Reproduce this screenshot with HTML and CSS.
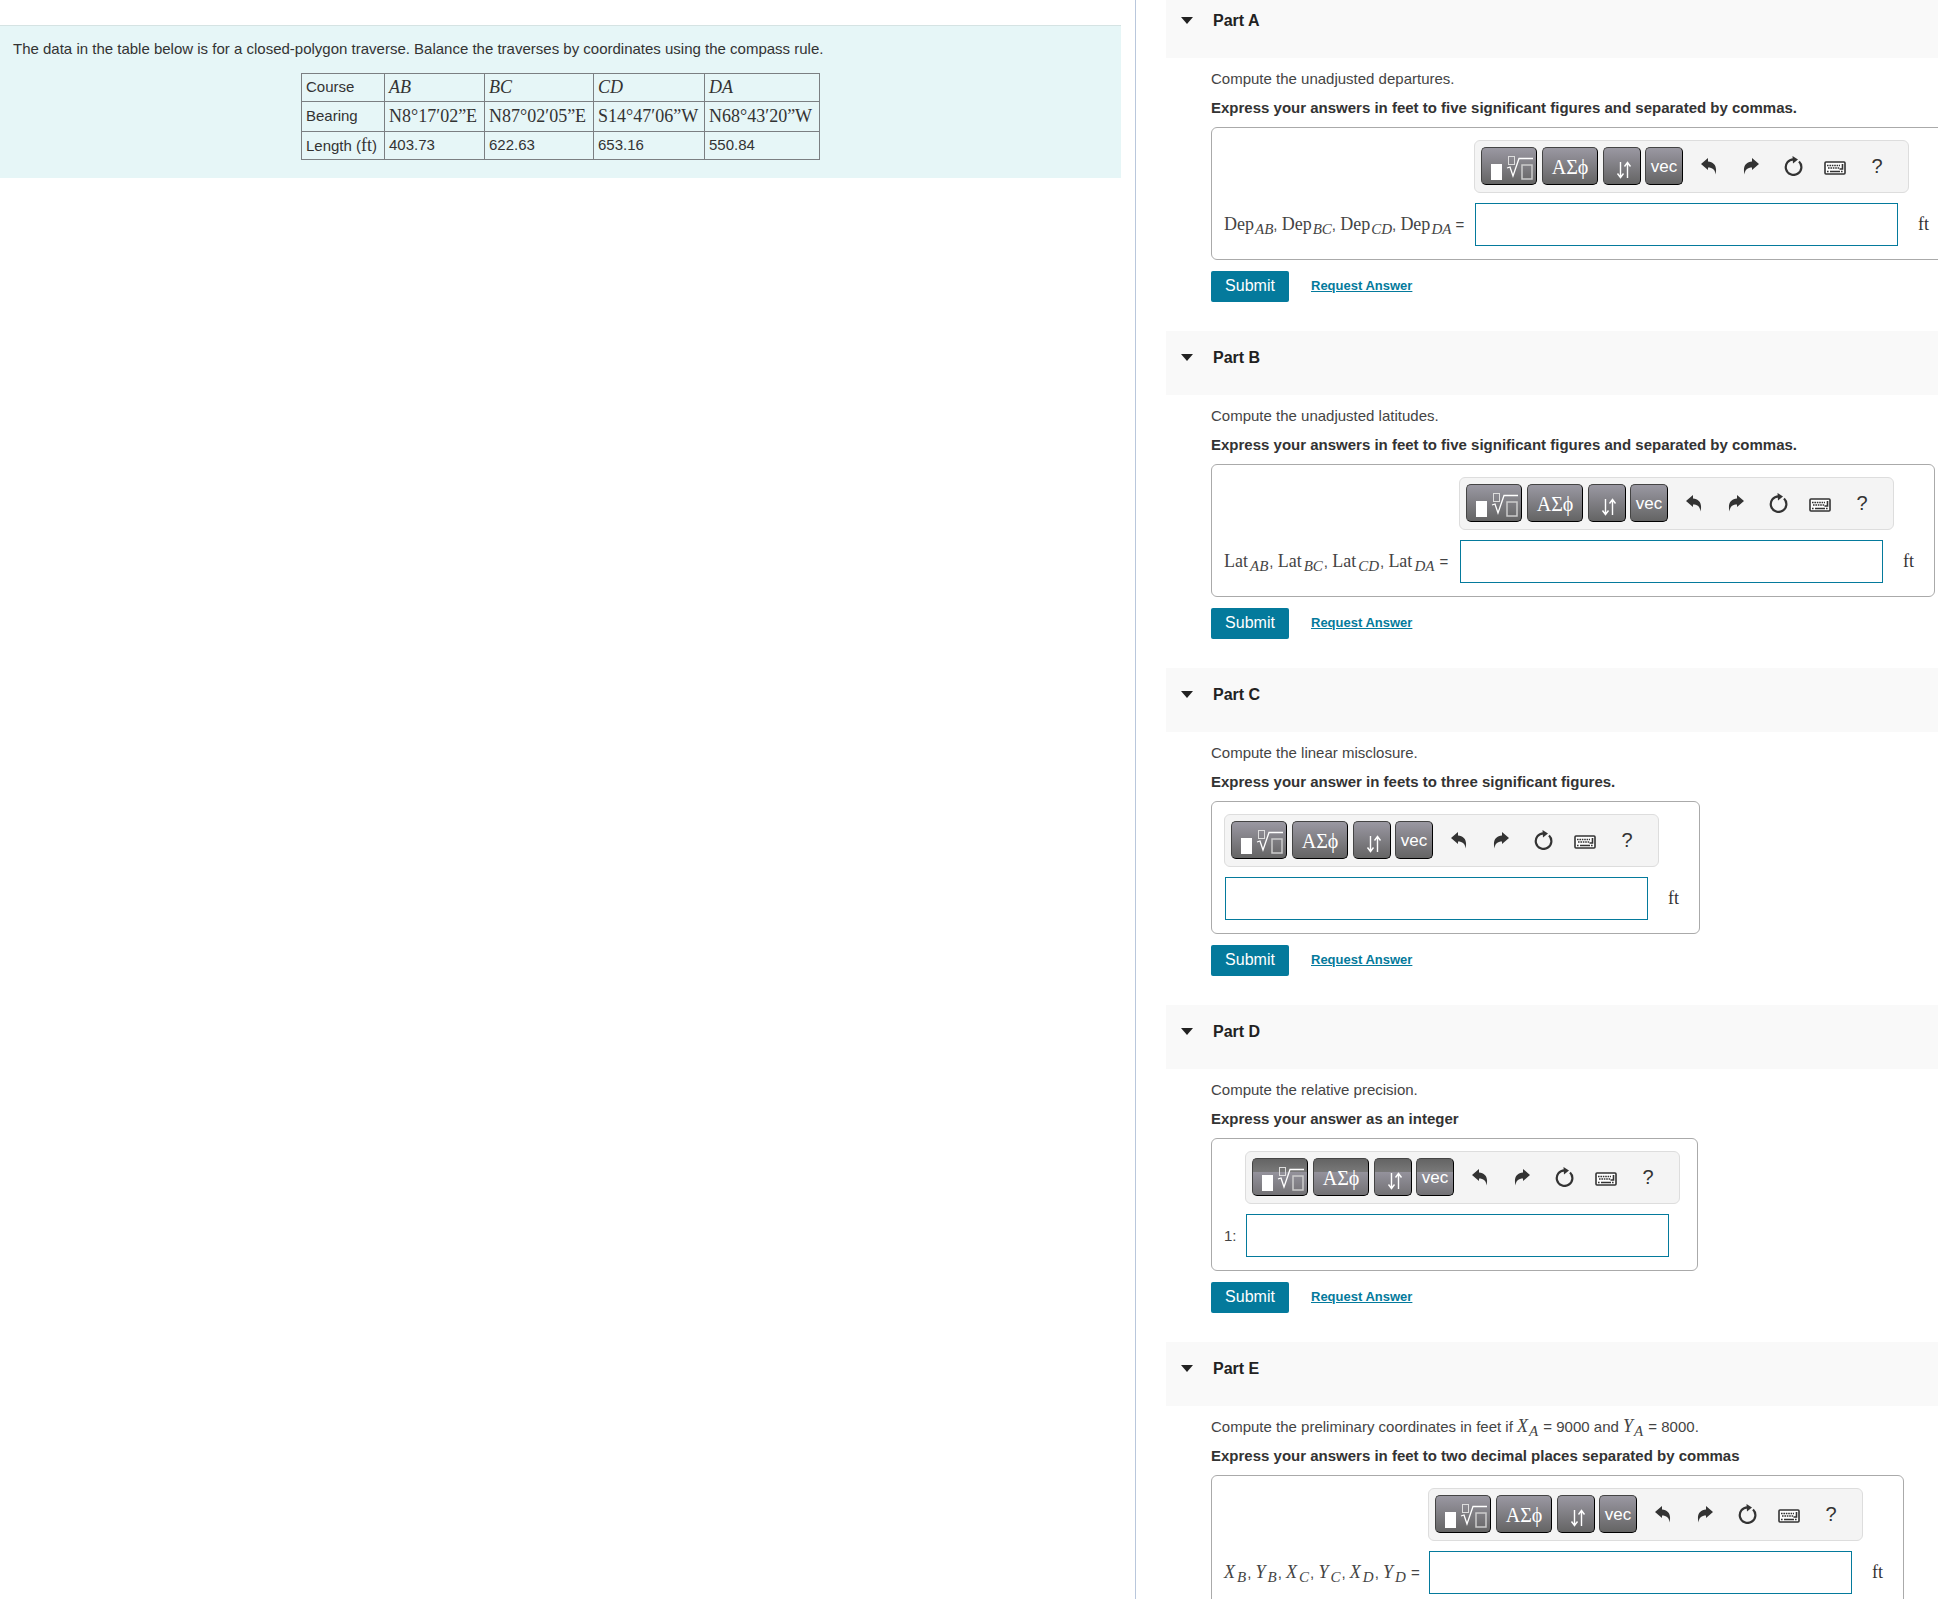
FILE: index.html
```html
<!DOCTYPE html>
<html lang="en">
<head>
    <meta charset="UTF-8">
    <meta name="viewport" content="width=device-width, initial-scale=1.0">
    <title>Closed-polygon traverse</title>
    <link rel="stylesheet" href="styles.css">
</head>
<body>
    <!-- Icons shared by the toolbars -->
    <svg class="defs" aria-hidden="true">
        <symbol id="icon-root" viewBox="1 1 54 36">
            <rect x="10" y="17" width="11" height="16" fill="#fff"/>
            <rect x="27.500" y="9.500" width="6" height="8" fill="none" stroke="#ddd"/>
            <path d="M26 21l3-1 3 9 6-17.500h14" fill="none" stroke="#fff" stroke-width="1.300"/>
            <rect x="41" y="18" width="10" height="14" fill="none" stroke="#ccc" stroke-width="1.500"/>
        </symbol>
        <symbol id="icon-arrows" viewBox="1 1 36 36">
            <path d="M17.500 15v15M14.500 26.500l3 4 3-4M24.500 31V16M21.500 19.500l3-4 3 4" fill="none" stroke="#fff" stroke-width="1.400"/>
        </symbol>
        <symbol id="icon-undo" viewBox="0 0 16 17">
            <path d="M0 6L7 0v3.500c6 .5 9.500 4.500 7.500 13C14 11.500 11.500 9.500 7 9.500V12z" fill="#333"/>
        </symbol>
        <symbol id="icon-redo" viewBox="0 0 16 17">
            <path d="M16 6L9 0v3.500C3 4-.5 8 1.500 16.500 2 11.500 4.500 9.500 9 9.500V12z" fill="#333"/>
        </symbol>
        <symbol id="icon-reset" viewBox="0 0 19 20">
            <path d="M15 5.500A7.800 7.800 0 1 1 9.500 3.300" fill="none" stroke="#333" stroke-width="2.200"/>
            <path d="M8.500 0l5.500 3.500-5 4z" fill="#333"/>
        </symbol>
        <symbol id="icon-keyboard" viewBox="0 0 22 14">
            <rect x="1" y="1" width="20" height="12" rx="1" fill="#fff" stroke="#333" stroke-width="1.600"/>
            <path d="M3 4.500h13M4 7h12M3 10.500h2M17 10.500h2" stroke="#333" stroke-width="1.600" stroke-dasharray="1.600 .8"/>
            <path d="M6 10.500h10M18.500 3v5h-3" fill="none" stroke="#333" stroke-width="1.600"/>
        </symbol>
    </svg>

    <main class="page">
        <section class="problem">
            <div class="intro">
                <p>The data in the table below is for a closed-polygon traverse. Balance the traverses by coordinates using the compass rule.</p>
                <table class="courses">
                    <tr>
                        <td class="col-name">Course</td>
                        <td class="col-ab"><i class="math">AB</i></td>
                        <td class="col-bc"><i class="math">BC</i></td>
                        <td class="col-cd"><i class="math">CD</i></td>
                        <td class="col-da"><i class="math">DA</i></td>
                    </tr>
                    <tr class="bearing">
                        <td>Bearing</td>
                        <td><span class="math">N8°17′02”E</span></td>
                        <td><span class="math">N87°02′05”E</span></td>
                        <td><span class="math">S14°47′06”W</span></td>
                        <td><span class="math">N68°43′20”W</span></td>
                    </tr>
                    <tr>
                        <td>Length (<span class="math">ft</span>)</td>
                        <td>403.73</td>
                        <td>622.63</td>
                        <td>653.16</td>
                        <td>550.84</td>
                    </tr>
                </table>
            </div>
        </section>

        <section class="parts">
            <article class="part">
                <h2 class="part-header">Part A</h2>
                <div class="part-body">
                    <p>Compute the unadjusted departures.</p>
                    <p class="hint">Express your answers in feet to five significant figures and separated by commas.</p>
                    <div class="answer">
                        <label class="label-dep" for="answer-a"><span class="math">Dep<sub>AB</sub></span>, <span class="math">Dep<sub>BC</sub></span>, <span class="math">Dep<sub>CD</sub></span>, <span class="math">Dep<sub>DA</sub></span> =</label>
                        <div class="editor">
                            <div class="toolbar">
                                <button class="key wide" aria-label="Templates"><svg><use href="#icon-root"/></svg></button>
                                <button class="key wide greek">ΑΣϕ</button>
                                <button class="key arrows" aria-label="Arrows"><svg><use href="#icon-arrows"/></svg></button>
                                <button class="key">vec</button>
                                <button class="tool" aria-label="Undo"><svg class="turn"><use href="#icon-undo"/></svg></button>
                                <button class="tool" aria-label="Redo"><svg class="turn"><use href="#icon-redo"/></svg></button>
                                <button class="tool" aria-label="Reset"><svg class="reset"><use href="#icon-reset"/></svg></button>
                                <button class="tool" aria-label="Keyboard"><svg class="keyboard"><use href="#icon-keyboard"/></svg></button>
                                <button class="tool">?</button>
                            </div>
                            <input type="text" id="answer-a">
                        </div>
                        <span class="unit">ft</span>
                    </div>
                    <div class="actions">
                        <button class="submit">Submit</button>
                        <a href="#">Request Answer</a>
                    </div>
                </div>
            </article>

            <article class="part">
                <h2 class="part-header">Part B</h2>
                <div class="part-body">
                    <p>Compute the unadjusted latitudes.</p>
                    <p class="hint">Express your answers in feet to five significant figures and separated by commas.</p>
                    <div class="answer">
                        <label class="label-lat" for="answer-b"><span class="math">Lat<sub>AB</sub></span>, <span class="math">Lat<sub>BC</sub></span>, <span class="math">Lat<sub>CD</sub></span>, <span class="math">Lat<sub>DA</sub></span> =</label>
                        <div class="editor">
                            <div class="toolbar">
                                <button class="key wide" aria-label="Templates"><svg><use href="#icon-root"/></svg></button>
                                <button class="key wide greek">ΑΣϕ</button>
                                <button class="key arrows" aria-label="Arrows"><svg><use href="#icon-arrows"/></svg></button>
                                <button class="key">vec</button>
                                <button class="tool" aria-label="Undo"><svg class="turn"><use href="#icon-undo"/></svg></button>
                                <button class="tool" aria-label="Redo"><svg class="turn"><use href="#icon-redo"/></svg></button>
                                <button class="tool" aria-label="Reset"><svg class="reset"><use href="#icon-reset"/></svg></button>
                                <button class="tool" aria-label="Keyboard"><svg class="keyboard"><use href="#icon-keyboard"/></svg></button>
                                <button class="tool">?</button>
                            </div>
                            <input type="text" id="answer-b">
                        </div>
                        <span class="unit">ft</span>
                    </div>
                    <div class="actions">
                        <button class="submit">Submit</button>
                        <a href="#">Request Answer</a>
                    </div>
                </div>
            </article>

            <article class="part">
                <h2 class="part-header">Part C</h2>
                <div class="part-body">
                    <p>Compute the linear misclosure.</p>
                    <p class="hint">Express your answer in feets to three significant figures.</p>
                    <div class="answer">
                        <div class="editor">
                            <div class="toolbar">
                                <button class="key wide" aria-label="Templates"><svg><use href="#icon-root"/></svg></button>
                                <button class="key wide greek">ΑΣϕ</button>
                                <button class="key arrows" aria-label="Arrows"><svg><use href="#icon-arrows"/></svg></button>
                                <button class="key">vec</button>
                                <button class="tool" aria-label="Undo"><svg class="turn"><use href="#icon-undo"/></svg></button>
                                <button class="tool" aria-label="Redo"><svg class="turn"><use href="#icon-redo"/></svg></button>
                                <button class="tool" aria-label="Reset"><svg class="reset"><use href="#icon-reset"/></svg></button>
                                <button class="tool" aria-label="Keyboard"><svg class="keyboard"><use href="#icon-keyboard"/></svg></button>
                                <button class="tool">?</button>
                            </div>
                            <input type="text" id="answer-c" aria-label="Linear misclosure">
                        </div>
                        <span class="unit">ft</span>
                    </div>
                    <div class="actions">
                        <button class="submit">Submit</button>
                        <a href="#">Request Answer</a>
                    </div>
                </div>
            </article>

            <article class="part">
                <h2 class="part-header">Part D</h2>
                <div class="part-body">
                    <p>Compute the relative precision.</p>
                    <p class="hint">Express your answer as an integer</p>
                    <div class="answer">
                        <label class="label-ratio" for="answer-d">1:</label>
                        <div class="editor">
                            <div class="toolbar split">
                                <button class="key wide" aria-label="Templates"><svg><use href="#icon-root"/></svg></button>
                                <button class="key wide greek">ΑΣϕ</button>
                                <button class="key arrows" aria-label="Arrows"><svg><use href="#icon-arrows"/></svg></button>
                                <button class="key">vec</button>
                                <button class="tool" aria-label="Undo"><svg class="turn"><use href="#icon-undo"/></svg></button>
                                <button class="tool" aria-label="Redo"><svg class="turn"><use href="#icon-redo"/></svg></button>
                                <button class="tool" aria-label="Reset"><svg class="reset"><use href="#icon-reset"/></svg></button>
                                <button class="tool" aria-label="Keyboard"><svg class="keyboard"><use href="#icon-keyboard"/></svg></button>
                                <button class="tool">?</button>
                            </div>
                            <input type="text" id="answer-d">
                        </div>
                    </div>
                    <div class="actions">
                        <button class="submit">Submit</button>
                        <a href="#">Request Answer</a>
                    </div>
                </div>
            </article>

            <article class="part">
                <h2 class="part-header">Part E</h2>
                <div class="part-body">
                    <p>Compute the preliminary coordinates in feet if <i class="math">X<sub>A</sub></i> = 9000 and <i class="math">Y<sub>A</sub></i> = 8000.</p>
                    <p class="hint">Express your answers in feet to two decimal places separated by commas</p>
                    <div class="answer">
                        <label class="label-xy" for="answer-e"><i class="math">X<sub>B</sub></i>, <i class="math">Y<sub>B</sub></i>, <i class="math">X<sub>C</sub></i>, <i class="math">Y<sub>C</sub></i>, <i class="math">X<sub>D</sub></i>, <i class="math">Y<sub>D</sub></i> =</label>
                        <div class="editor">
                            <div class="toolbar">
                                <button class="key wide" aria-label="Templates"><svg><use href="#icon-root"/></svg></button>
                                <button class="key wide greek">ΑΣϕ</button>
                                <button class="key arrows" aria-label="Arrows"><svg><use href="#icon-arrows"/></svg></button>
                                <button class="key">vec</button>
                                <button class="tool" aria-label="Undo"><svg class="turn"><use href="#icon-undo"/></svg></button>
                                <button class="tool" aria-label="Redo"><svg class="turn"><use href="#icon-redo"/></svg></button>
                                <button class="tool" aria-label="Reset"><svg class="reset"><use href="#icon-reset"/></svg></button>
                                <button class="tool" aria-label="Keyboard"><svg class="keyboard"><use href="#icon-keyboard"/></svg></button>
                                <button class="tool">?</button>
                            </div>
                            <input type="text" id="answer-e">
                        </div>
                        <span class="unit">ft</span>
                    </div>
                </div>
            </article>
        </section>
    </main>
</body>
</html>
```
FILE: styles.css
```css
* {
    box-sizing: border-box;
}

body {
    margin: 0;
    font-family: "Liberation Sans", Arial, sans-serif;
    font-size: 15px;
    color: #333;
    background-color: #fff;
}

p {
    margin: 0;
}

.defs {
    display: none;
}

/* Two panes side by side, each clips its own content */
.page {
    display: flex;
    height: 100vh;
    overflow: hidden;
}

.problem {
    flex: 1;
    padding: 25px 14px 0 0;
    border-right: 1px solid #b9c7dc;
}

.parts {
    width: 802px;
    padding-left: 30px;
    overflow: hidden;
}

/* Math text */
.math {
    font-family: "Liberation Serif", "Times New Roman", serif;
    font-size: 18px;
    line-height: 20px;
}

.math sub {
    margin: 0 1px 0 2px;
    font-size: 15px;
    font-style: italic;
    line-height: 1px;
    vertical-align: -4px;
}

i.math sub {
    margin-left: 1px;
}

/* Problem statement */
.intro {
    padding: 12px 13px 18px;
    border-top: 1px solid #d5e3e3;
    background-color: #e6f6f7;
}

.intro p {
    line-height: 21px;
}

.courses {
    margin: 14px auto 0;
    border-collapse: collapse;
}

.courses td {
    height: 28px;
    padding: 0 4px 2px;
    border: 1px solid #7b7f82;
    white-space: nowrap;
}

.courses .bearing td {
    height: 30px;
}

.col-name {
    width: 83px;
}

.col-ab {
    width: 100px;
}

.col-bc {
    width: 109px;
}

.col-cd {
    width: 111px;
}

.col-da {
    width: 115px;
}

/* Question parts */
.part-header {
    display: flex;
    align-items: center;
    height: 64px;
    margin: 0;
    padding: 0 0 11px 15px;
    font-size: 16px;
    color: #222;
    background-color: #f9f9f9;
}

/* The first header is partly scrolled off */
.part:first-child .part-header {
    height: 58px;
    padding-bottom: 17px;
}

.part-header::before {
    content: "";
    margin-right: 20px;
    border: 6px solid transparent;
    border-top: 7px solid #222;
    border-bottom: 0;
}

.part-body {
    padding: 10px 0 29px 45px;
}

.part-body p {
    height: 21px;
    margin-bottom: 8px;
    color: #444;
    line-height: 21px;
    white-space: nowrap;
}

.part-body .hint {
    margin-bottom: 9px;
    color: #333;
    font-weight: bold;
}

.answer {
    display: flex;
    align-items: flex-end;
    width: max-content;
    height: 133px;
    padding: 12px 17px 13px 12px;
    border: 1px solid #aaa;
    border-radius: 6px;
}

.answer label {
    height: 43px;
    color: #444;
    line-height: 43px;
    white-space: nowrap;
}

.label-dep {
    width: 250px;
}

.label-dep .math sub {
    margin: 0 0 0 1px;
}

.label-lat {
    width: 235px;
}

.label-ratio {
    width: 21px;
}

.label-xy {
    width: 204px;
}

.label-xy .math sub {
    margin-left: 2px;
}

.editor {
    width: 435px;
}

.editor input {
    display: block;
    width: 423px;
    height: 43px;
    margin: 10px 0 0 1px;
    padding: 0 8px;
    border: 1px solid #047a9c;
    font-size: 16px;
}

.unit {
    width: 23px;
    padding-left: 9px;
    font-family: "Liberation Serif", "Times New Roman", serif;
    font-size: 18px;
    line-height: 43px;
}

/* Equation toolbar */
.toolbar {
    display: flex;
    align-items: center;
    height: 53px;
    padding: 0 6px 1px;
    border: 1px solid #ddd;
    border-radius: 6px;
    background-color: #f4f4f4;
}

.toolbar button {
    flex: none;
    padding: 0;
    font-family: inherit;
}

.toolbar svg {
    display: block;
}

.key {
    width: 38px;
    height: 38px;
    margin-right: 5px;
    border: 1px solid #000;
    border-top-color: #444;
    border-left-color: #444;
    border-radius: 5px;
    background: linear-gradient(#9a98a2, #646464);
    color: #fff;
    font-size: 17px;
}

.key svg {
    width: 100%;
    height: 36px;
}

.toolbar .wide {
    width: 56px;
}

.toolbar .greek {
    font-family: "Liberation Serif", "Times New Roman", serif;
    font-size: 20px;
}

.toolbar .arrows {
    margin-right: 4px;
}

.toolbar .key {
    padding-top: 2px;
}

.toolbar .key:has(svg) {
    padding-top: 0;
}

.split .key {
    background: linear-gradient(#646464, #787878 35%, #94929c 36%, #737275);
}

.tool {
    display: flex;
    align-items: center;
    justify-content: center;
    width: 42px;
    height: 38px;
    border: 0;
    background: none;
    color: #333;
    font-size: 20px;
}

.turn {
    width: 16px;
    height: 17px;
}

.reset {
    width: 19px;
    height: 20px;
}

.keyboard {
    width: 22px;
    height: 14px;
    margin-top: 4px;
}

/* Buttons below the answer box */
.actions {
    display: flex;
    align-items: center;
    gap: 22px;
    margin-top: 11px;
}

.submit {
    width: 78px;
    height: 31px;
    padding: 0 0 2px;
    border: 0;
    border-radius: 2px;
    background-color: #047a9c;
    color: #fff;
    font-family: inherit;
    font-size: 16px;
}

.actions a {
    padding-bottom: 2px;
    color: #047a9c;
    font-size: 13px;
    font-weight: bold;
}
```
